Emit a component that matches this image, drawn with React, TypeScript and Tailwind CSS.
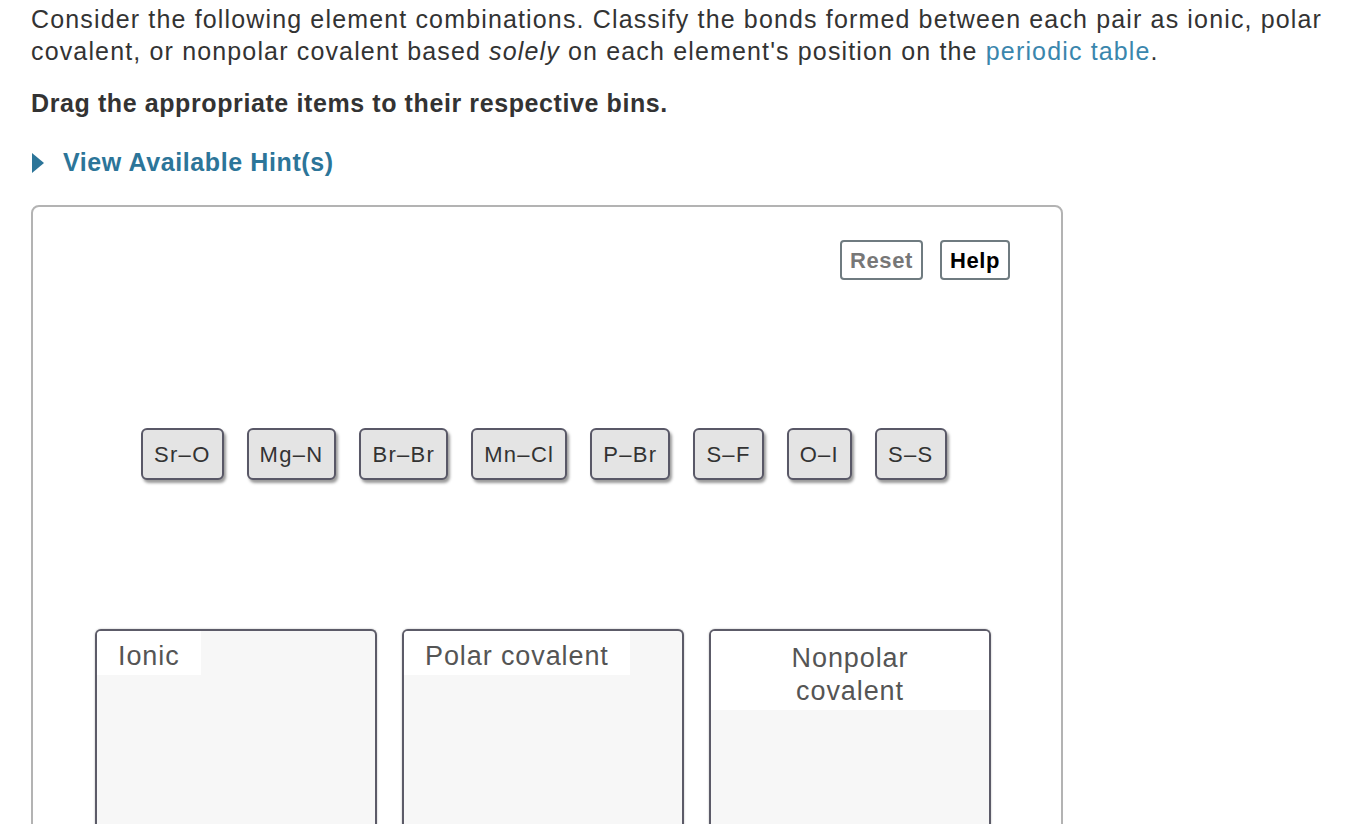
const tokens = ['Sr–O', 'Mg–N', 'Br–Br', 'Mn–Cl', 'P–Br', 'S–F', 'O–I', 'S–S'];

function Token({ label }: { label: string }) {
  return (
    <div className="h-[52px] px-[11px] flex items-center rounded-[6px] border-2 border-[#595867] bg-[#e4e4e4] text-[22px] tracking-[1.3px] text-[#333] shadow-[2px_3px_3px_rgba(0,0,0,0.4)]">
      {label}
    </div>
  );
}

function Bin({ label, full }: { label: React.ReactNode; full?: boolean }) {
  return (
    <div className="w-[282px] h-[240px] rounded-t-[6px] border-2 border-b-0 border-[#5c5b68] bg-[#f7f7f7] shadow-[0_0_2px_rgba(0,0,0,0.3)]">
      <div
        className={
          full
            ? 'bg-white text-center text-[27px] tracking-[0.9px] leading-[33px] pt-[11px] pb-[2px] text-[#555] rounded-t-[4px]'
            : 'inline-block bg-white px-[21px] text-[27px] tracking-[0.9px] leading-[33px] pt-[9px] pb-[2px] text-[#555] rounded-tl-[4px]'
        }
      >
        {label}
      </div>
    </div>
  );
}

export default function App() {
  return (
    <div className="min-h-[824px] bg-white pl-[31px] pt-[3px] font-['Liberation_Sans',Arial,sans-serif] text-[#333] overflow-hidden">
      <p className="text-[25px] tracking-[1.15px] leading-[32px] w-[1335px]">
        Consider the following element combinations. Classify the bonds formed between each pair as ionic, polar
        <br />
        covalent, or nonpolar covalent based <em>solely</em> on each element's position on the{' '}
        <span className="text-[#3a86ad]">periodic table</span>.
      </p>
      <p className="mt-[20px] text-[25px] tracking-[0.6px] leading-[32px] font-bold">
        Drag the appropriate items to their respective bins.
      </p>

      <div className="mt-[28px] flex items-center h-[32px]">
        <svg width="12" height="20" viewBox="0 0 12 20" className="ml-[1px]">
          <polygon points="0,0 12,10 0,20" fill="#2c7599" />
        </svg>
        <span className="ml-[19px] text-[25px] tracking-[0.6px] font-bold text-[#2c7599]">View Available Hint(s)</span>
      </div>

      <div className="mt-[26px] w-[1032px] h-[640px] rounded-[8px] border-2 border-[#b3b3b3]">
        <div className="flex justify-end gap-[17px] pr-[51px] pt-[33px]">
          <button className="h-[40px] px-[8px] rounded-[4px] border-2 border-[#6f7b80] text-[22px] tracking-[0.6px] font-bold text-[#777]">
            Reset
          </button>
          <button className="h-[40px] px-[8px] rounded-[4px] border-2 border-[#6f7b80] text-[22px] tracking-[0.6px] font-bold text-black">
            Help
          </button>
        </div>

        <div className="mt-[148px] flex gap-[23px] pl-[108px]">
          {tokens.map((t) => (
            <Token key={t} label={t} />
          ))}
        </div>

        <div className="mt-[149px] flex gap-[25px] pl-[62px]">
          <Bin label="Ionic" />
          <Bin label="Polar covalent" />
          <Bin
            full
            label={
              <>
                Nonpolar
                <br />
                covalent
              </>
            }
          />
        </div>
      </div>
    </div>
  );
}
